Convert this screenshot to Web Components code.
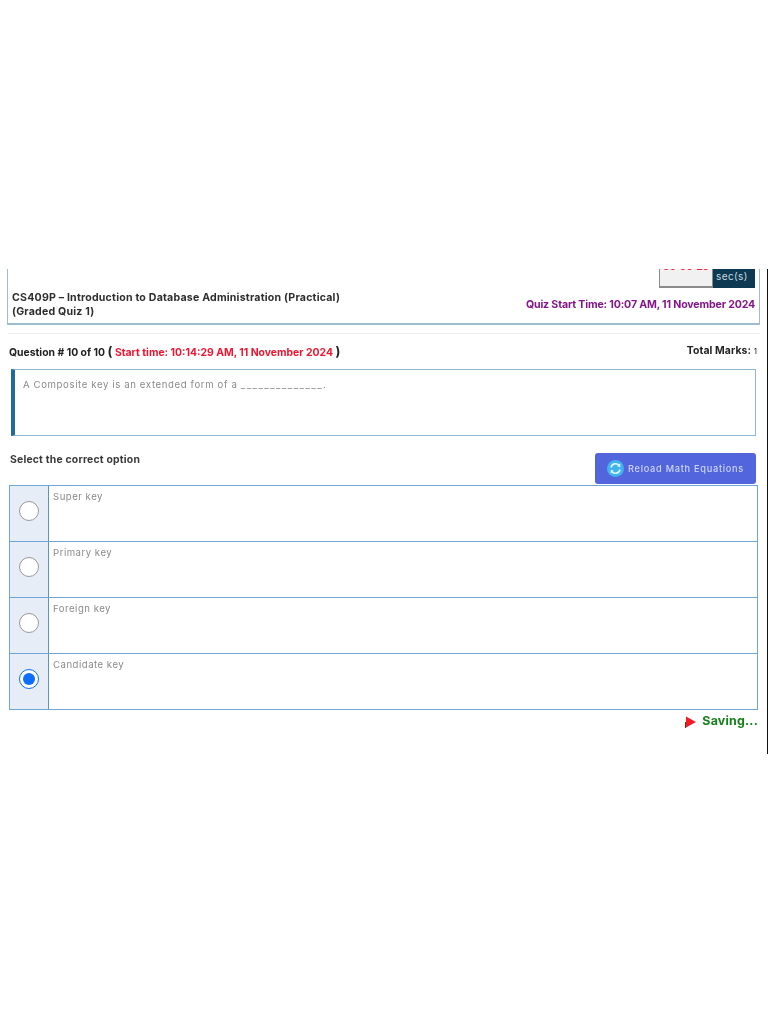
<!DOCTYPE html>
<html lang="en">
<head>
<meta charset="utf-8">
<title>Graded Quiz</title>
<style>
  html, body { margin: 0; padding: 0; background: #fff; }
  body { font-family: "Inter", "Liberation Sans", sans-serif; height: 1024px; overflow: hidden; }
</style>
</head>
<body>
<quiz-page>
  <quiz-header></quiz-header>
  <question-bar></question-bar>
  <question-text>A Composite key is an extended form of a <span style="letter-spacing:1.5px">______________</span>.</question-text>
  <option-toolbar></option-toolbar>
  <option-list>
    <quiz-option>Super key</quiz-option>
    <quiz-option>Primary key</quiz-option>
    <quiz-option>Foreign key</quiz-option>
    <quiz-option checked>Candidate key</quiz-option>
  </option-list>
  <save-status></save-status>
</quiz-page>

<script>
class QuizPage extends HTMLElement {
  connectedCallback() {
    this.attachShadow({ mode: 'open' });
    this.shadowRoot.innerHTML = `
      <style>
        :host {
          display: block;
          box-sizing: border-box;
          width: 768px;
          height: 485px;
          margin-top: 269px;
          overflow: hidden;
          border-right: 1px solid #111;
          filter: blur(0.35px);
        }
      </style>
      <slot></slot>
    `;
  }
}
customElements.define('quiz-page', QuizPage);

class QuizHeader extends HTMLElement {
  connectedCallback() {
    this.attachShadow({ mode: 'open' });
    this.shadowRoot.innerHTML = `
      <style>
        :host {
          display: flex;
          box-sizing: border-box;
          width: 753px;
          height: 56px;
          margin-left: 7px;
          padding: 0 4px 0 4px;
          justify-content: space-between;
          border: 1px solid #9dbccc;
          border-top: 0;
          border-bottom-width: 2px;
          color: #2e2e2e;
        }
        .title {
          align-self: flex-end;
          font-size: 10.6px;
          line-height: 14px;
          font-weight: 700;
          letter-spacing: .2px;
          padding-bottom: 4px;
        }
        .right {
          display: flex;
          flex-direction: column;
          align-items: flex-end;
        }
        .timer {
          display: flex;
          height: 20px;
          margin-top: -1px;
          overflow: hidden;
        }
        .left {
          box-sizing: border-box;
          width: 54px;
          background: #f1f1f1;
          border: 1px solid #8b8b8b;
          border-top: 0;
          border-bottom-width: 2px;
          overflow: hidden;
        }
        .left b {
          display: block;
          margin-top: -8px;
          color: #f0213a;
          font-size: 10px;
          line-height: 12px;
          text-align: center;
        }
        .sec {
          box-sizing: border-box;
          width: 42px;
          background: #0d3a52;
          color: #c9d8e0;
          font-size: 10px;
          line-height: 17px;
          padding-left: 3px;
          letter-spacing: .4px;
        }
        .start {
          margin-top: 10px;
          color: #86148a;
          font-size: 10.6px;
          line-height: 14px;
          font-weight: 700;
          letter-spacing: -.16px;
          white-space: nowrap;
        }
      </style>
      <div class="title">CS409P – Introduction to Database Administration (Practical)<br>(Graded Quiz 1)</div>
      <div class="right">
        <div class="timer"><div class="left"><b>00:00:29</b></div><div class="sec">sec(s)</div></div>
        <div class="start">Quiz Start Time: 10:07 AM, 11 November 2024</div>
      </div>
    `;
  }
}
customElements.define('quiz-header', QuizHeader);

class QuestionBar extends HTMLElement {
  connectedCallback() {
    this.attachShadow({ mode: 'open' });
    this.shadowRoot.innerHTML = `
      <style>
        :host {
          display: flex;
          box-sizing: border-box;
          width: 752px;
          height: 36px;
          margin: 8px 0 0 8px;
          padding: 9px 2px 0 1px;
          justify-content: space-between;
          border-top: 1px solid #eeeeee;
          color: #222;
          font-size: 10.4px;
          line-height: 16px;
          font-weight: 700;
        }
        .red { color: #f0142f; }
        .paren { font-size: 13px; font-weight: 700; }
        .marks { white-space: nowrap; margin-right: 1px; letter-spacing: .1px; }
        .marks span { font-weight: 400; font-size: 8px; }
      </style>
      <div>Question # 10 of 10 <span class="paren">(</span> <span class="red">Start time: 10:14:29 AM, 11 November 2024</span> <span class="paren">)</span></div>
      <div class="marks">Total Marks: <span>1</span></div>
    `;
  }
}
customElements.define('question-bar', QuestionBar);

class QuestionText extends HTMLElement {
  connectedCallback() {
    this.attachShadow({ mode: 'open' });
    this.shadowRoot.innerHTML = `
      <style>
        :host {
          display: block;
          box-sizing: border-box;
          width: 745px;
          height: 67px;
          margin-left: 11px;
          padding: 8px 8px;
          border: 1px solid #8fb8d0;
          border-left: 4px solid #1d6c9c;
          color: #8a8a8a;
          font-size: 9.6px;
          line-height: 14px;
          letter-spacing: .62px;
        }
      </style>
      <slot></slot>
    `;
  }
}
customElements.define('question-text', QuestionText);

class OptionToolbar extends HTMLElement {
  connectedCallback() {
    this.attachShadow({ mode: 'open' });
    this.shadowRoot.innerHTML = `
      <style>
        :host {
          display: flex;
          box-sizing: border-box;
          width: 746px;
          height: 49px;
          margin-left: 10px;
          padding-top: 17px;
          justify-content: space-between;
          align-items: flex-start;
        }
        .label {
          color: #3a3a3a;
          font-size: 10.4px;
          line-height: 14px;
          font-weight: 700;
          letter-spacing: .2px;
        }
        button {
          display: flex;
          align-items: center;
          gap: 4px;
          box-sizing: border-box;
          width: 161px;
          height: 31px;
          padding: 0 0 1px 12px;
          border: 0;
          border-radius: 3px;
          background: #5365dd;
          color: #cdd5f5;
          font: 500 9.2px "Inter", "Liberation Sans", sans-serif;
          letter-spacing: .73px;
          white-space: nowrap;
        }
        svg { flex: none; }
      </style>
      <div class="label">Select the correct option</div>
      <button>
        <svg width="17" height="17" viewBox="0 0 17 17">
          <circle cx="8.5" cy="8.5" r="8.5" fill="#3fb4ee"/>
          <path d="M4 7.5A4.6 4.6 0 0 1 12.2 5.6" fill="none" stroke="#dff3fb" stroke-width="1.6"/>
          <path d="M13 9.5A4.6 4.6 0 0 1 4.8 11.4" fill="none" stroke="#dff3fb" stroke-width="1.6"/>
          <path d="M13.4 3.6L13.2 7.2L10 6.2Z" fill="#dff3fb"/>
          <path d="M3.6 13.4L3.8 9.8L7 10.8Z" fill="#dff3fb"/>
        </svg>
        Reload Math Equations
      </button>
    `;
  }
}
customElements.define('option-toolbar', OptionToolbar);

class OptionList extends HTMLElement {
  connectedCallback() {
    this.attachShadow({ mode: 'open' });
    this.shadowRoot.innerHTML = `
      <style>
        :host {
          display: block;
          box-sizing: border-box;
          width: 749px;
          margin-left: 9px;
          border: 1px solid #6fa6d6;
          border-top: 0;
        }
      </style>
      <slot></slot>
    `;
  }
}
customElements.define('option-list', OptionList);

class QuizOption extends HTMLElement {
  connectedCallback() {
    const checked = this.hasAttribute('checked');
    this.attachShadow({ mode: 'open' });
    this.shadowRoot.innerHTML = `
      <style>
        :host {
          display: grid;
          grid-template-columns: 39px 1fr;
          box-sizing: border-box;
          height: 56px;
          border-top: 1px solid #6fa6d6;
        }
        .pick {
          display: flex;
          align-items: flex-start;
          justify-content: center;
          padding-top: 15px;
          background: #e6edf7;
          border-right: 1px solid #5b94c6;
        }
        .radio {
          box-sizing: border-box;
          width: 20px;
          height: 20px;
          border-radius: 50%;
          background: #fff;
          border: 1.5px solid ${checked ? '#0d6efd' : '#999'};
          display: flex;
          align-items: center;
          justify-content: center;
        }
        .radio i {
          display: ${checked ? 'block' : 'none'};
          width: 12px;
          height: 12px;
          border-radius: 50%;
          background: #0d6efd;
        }
        .text {
          padding: 4px 4px;
          color: #8a8a8a;
          font-size: 9.6px;
          line-height: 14px;
          letter-spacing: .5px;
        }
      </style>
      <div class="pick"><span class="radio"><i></i></span></div>
      <div class="text"><slot></slot></div>
    `;
  }
}
customElements.define('quiz-option', QuizOption);

class SaveStatus extends HTMLElement {
  connectedCallback() {
    this.attachShadow({ mode: 'open' });
    this.shadowRoot.innerHTML = `
      <style>
        :host {
          display: flex;
          box-sizing: border-box;
          width: 758px;
          height: 21px;
          justify-content: flex-end;
          align-items: center;
          gap: 6px;
          color: #15801a;
          font-size: 12.4px;
          font-weight: 700;
          letter-spacing: .2px;
        }
        svg { flex: none; margin-top: 2px; }
      </style>
      <svg width="11" height="12" viewBox="0 0 11 12"><path d="M1 0.5L11 6L1 11.5Z" fill="#ee1c25"/><path d="M0.5 6V12" stroke="#7a2a10" stroke-width="1"/></svg>
      <span>Saving...</span>
    `;
  }
}
customElements.define('save-status', SaveStatus);
</script>
</body>
</html>
